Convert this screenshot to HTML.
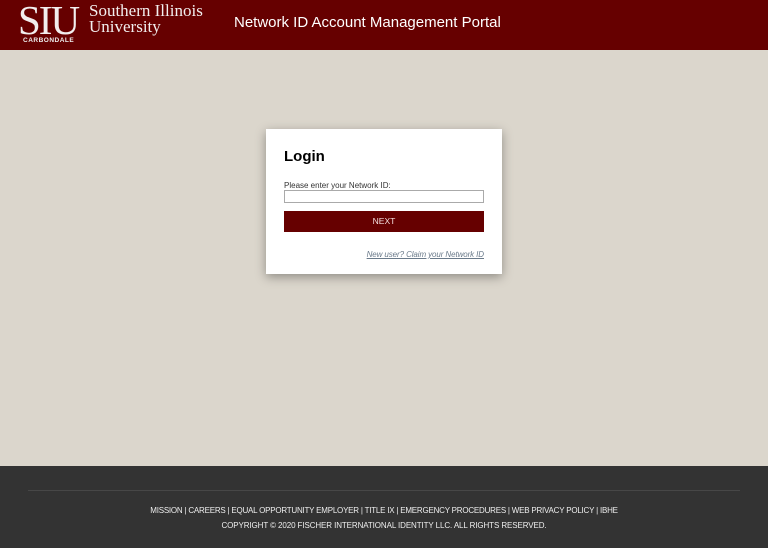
<!DOCTYPE html>
<html><head><meta charset="utf-8"><style>
*{margin:0;padding:0;box-sizing:border-box}
body{width:768px;height:548px;background:#dbd6cc;font-family:"Liberation Sans",sans-serif;position:relative;overflow:hidden}
.hdr{position:absolute;left:0;top:0;width:768px;height:50px;background:#660000;color:#fff}
.siu{position:absolute;left:18px;top:-4px;font-family:"Liberation Serif",serif;font-size:41px;letter-spacing:-2px;color:#f2eeee}
.carb{position:absolute;left:23px;top:37px;font-size:6.5px;letter-spacing:.5px;color:#eee;font-weight:bold}
.sname{position:absolute;left:89px;top:3px;font-family:"Liberation Serif",serif;font-size:17px;line-height:16px;color:#f2eeee}
.title{position:absolute;left:234px;top:14px;font-size:15px}
.card{position:absolute;left:266px;top:129px;width:236px;height:145px;background:#fff;box-shadow:0 3px 10px rgba(0,0,0,.35)}
h1{position:absolute;left:18px;top:19px;font-size:15px}
.lab{position:absolute;left:18px;top:52px;font-size:8px;color:#333}
.inp{position:absolute;left:18px;top:61px;width:200px;height:13px;border:1px solid #aaa}
.btn{position:absolute;left:18px;top:82px;width:200px;height:21px;background:#660000;color:#f3dede;font-size:8.5px;text-align:center;line-height:21px}
.lnk{position:absolute;right:18px;top:121px;font-size:8px;font-style:italic;color:#6a7a8a;text-decoration:underline;letter-spacing:-.1px}
.ftr{position:absolute;left:0;top:466px;width:768px;height:82px;background:#333}
.line{position:absolute;left:28px;top:24px;width:712px;border-top:1px solid #474747}
.f1,.f2{position:absolute;width:768px;text-align:center;color:#eee;font-size:8px}
.f1{top:40px;letter-spacing:-.22px}.f2{top:55px;letter-spacing:-.1px}
</style></head><body>
<div class="hdr"><div class="siu">SIU</div><div class="carb">CARBONDALE</div><div class="sname">Southern Illinois<br>University</div><div class="title">Network ID Account Management Portal</div></div>
<div class="card"><h1>Login</h1><div class="lab">Please enter your Network ID:</div><div class="inp"></div><div class="btn">NEXT</div><div class="lnk">New user? Claim your Network ID</div></div>
<div class="ftr"><div class="line"></div><div class="f1">MISSION | CAREERS | EQUAL OPPORTUNITY EMPLOYER | TITLE IX | EMERGENCY PROCEDURES | WEB PRIVACY POLICY | IBHE</div><div class="f2">COPYRIGHT © 2020 FISCHER INTERNATIONAL IDENTITY LLC. ALL RIGHTS RESERVED.</div></div>
</body></html>
